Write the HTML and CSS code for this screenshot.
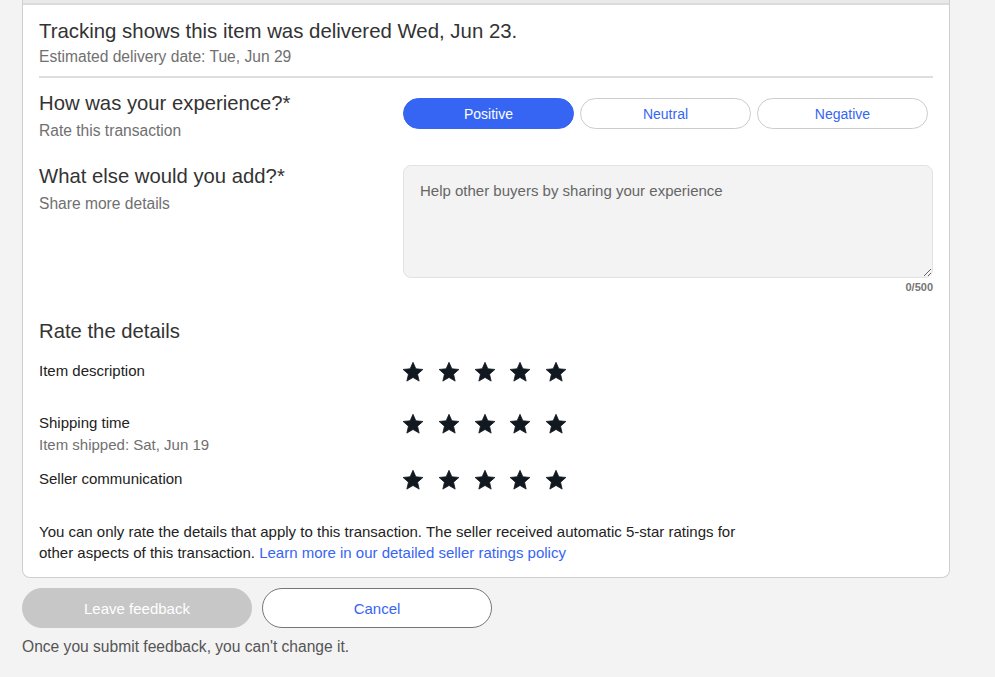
FILE: index.html
```html
<!DOCTYPE html>
<html lang="en">
<head>
<meta charset="utf-8">
<title>Leave feedback</title>
<link rel="stylesheet" href="styles.css">
</head>
<body>
<div class="page">
  <section class="card">
    <div class="card-top"></div>
    <div class="card-body">
      <h2 class="tracking">Tracking shows this item was delivered Wed, Jun 23.</h2>
      <p class="muted est">Estimated delivery date: Tue, Jun 29</p>
      <hr class="sep">

      <div class="row exp-row">
        <div class="label-col">
          <h3 class="q">How was your experience?*</h3>
          <p class="muted">Rate this transaction</p>
        </div>
        <div class="choice">
          <button class="pill active">Positive</button>
          <button class="pill">Neutral</button>
          <button class="pill">Negative</button>
        </div>
      </div>

      <div class="row add-row">
        <div class="label-col">
          <h3 class="q">What else would you add?*</h3>
          <p class="muted">Share more details</p>
        </div>
        <div class="field">
          <textarea class="comment" placeholder="Help other buyers by sharing your experience"></textarea>
          <div class="counter">0/500</div>
        </div>
      </div>

      <h2 class="details-title">Rate the details</h2>

      <div class="row detail">
        <div class="label-col"><p class="dlabel">Item description</p></div>
        <div class="stars">
          <svg viewBox="0 0 24 24"><path d="M12 2.3l2.85 6.5 7.05.65-5.35 4.7 1.6 6.950L12 17.45 5.85 21.1l1.6-6.95-5.35-4.7 7.05-.65z"/></svg>
          <svg viewBox="0 0 24 24"><path d="M12 2.3l2.85 6.5 7.05.65-5.35 4.7 1.6 6.95L12 17.45 5.85 21.1l1.6-6.95-5.35-4.7 7.05-.65z"/></svg>
          <svg viewBox="0 0 24 24"><path d="M12 2.3l2.85 6.5 7.05.65-5.35 4.7 1.6 6.95L12 17.45 5.85 21.1l1.6-6.95-5.35-4.7 7.05-.65z"/></svg>
          <svg viewBox="0 0 24 24"><path d="M12 2.3l2.85 6.5 7.05.65-5.35 4.7 1.6 6.95L12 17.45 5.85 21.1l1.6-6.95-5.35-4.7 7.05-.65z"/></svg>
          <svg viewBox="0 0 24 24"><path d="M12 2.3l2.85 6.5 7.05.65-5.35 4.7 1.6 6.95L12 17.45 5.85 21.1l1.6-6.95-5.35-4.7 7.05-.65z"/></svg>
        </div>
      </div>

      <div class="row detail">
        <div class="label-col">
          <p class="dlabel">Shipping time</p>
          <p class="muted dsub">Item shipped: Sat, Jun 19</p>
        </div>
        <div class="stars">
          <svg viewBox="0 0 24 24"><path d="M12 2.3l2.85 6.5 7.05.65-5.35 4.7 1.6 6.95L12 17.45 5.85 21.1l1.6-6.95-5.35-4.7 7.05-.65z"/></svg>
          <svg viewBox="0 0 24 24"><path d="M12 2.3l2.85 6.5 7.05.65-5.35 4.7 1.6 6.95L12 17.45 5.85 21.1l1.6-6.95-5.35-4.7 7.05-.65z"/></svg>
          <svg viewBox="0 0 24 24"><path d="M12 2.3l2.85 6.5 7.05.65-5.35 4.7 1.6 6.95L12 17.45 5.85 21.1l1.6-6.95-5.35-4.7 7.05-.65z"/></svg>
          <svg viewBox="0 0 24 24"><path d="M12 2.3l2.85 6.5 7.05.65-5.35 4.7 1.6 6.95L12 17.45 5.85 21.1l1.6-6.95-5.35-4.7 7.05-.65z"/></svg>
          <svg viewBox="0 0 24 24"><path d="M12 2.3l2.85 6.5 7.05.65-5.35 4.7 1.6 6.95L12 17.45 5.85 21.1l1.6-6.95-5.35-4.7 7.05-.65z"/></svg>
        </div>
      </div>

      <div class="row detail">
        <div class="label-col"><p class="dlabel">Seller communication</p></div>
        <div class="stars">
          <svg viewBox="0 0 24 24"><path d="M12 2.3l2.85 6.5 7.05.65-5.35 4.7 1.6 6.95L12 17.45 5.85 21.1l1.6-6.95-5.35-4.7 7.05-.65z"/></svg>
          <svg viewBox="0 0 24 24"><path d="M12 2.3l2.85 6.5 7.05.65-5.35 4.7 1.6 6.95L12 17.45 5.85 21.1l1.6-6.95-5.35-4.7 7.05-.65z"/></svg>
          <svg viewBox="0 0 24 24"><path d="M12 2.3l2.85 6.5 7.05.65-5.35 4.7 1.6 6.95L12 17.45 5.85 21.1l1.6-6.95-5.35-4.7 7.05-.65z"/></svg>
          <svg viewBox="0 0 24 24"><path d="M12 2.3l2.85 6.5 7.05.65-5.35 4.7 1.6 6.95L12 17.45 5.85 21.1l1.6-6.95-5.35-4.7 7.05-.65z"/></svg>
          <svg viewBox="0 0 24 24"><path d="M12 2.3l2.85 6.5 7.05.65-5.35 4.7 1.6 6.95L12 17.45 5.85 21.1l1.6-6.95-5.35-4.7 7.05-.65z"/></svg>
        </div>
      </div>

      <p class="policy">You can only rate the details that apply to this transaction. The seller received automatic 5-star ratings for other aspects of this transaction. <a href="#">Learn more in our detailed seller ratings policy</a></p>
    </div>
  </section>

  <div class="actions">
    <button class="btn btn-primary" disabled>Leave feedback</button>
    <button class="btn btn-secondary">Cancel</button>
  </div>
  <p class="note">Once you submit feedback, you can't change it.</p>
</div>
</body>
</html>
```

FILE: styles.css
```css
html, body {
  margin: 0;
  padding: 0;
}
body {
  background: #f3f3f3;
  font-family: "Liberation Sans", Arial, sans-serif;
  color: #333;
}
p, h2, h3 { margin: 0; font-weight: normal; }

.page {
  width: 928px;
  margin-left: 22px;
}

.card {
  background: #fff;
  border: 1px solid #cfcfcf;
  border-top: none;
  border-radius: 0 0 8px 8px;
}
.card-top {
  height: 3px;
  background: #e9e9e9;
  border-bottom: 2px solid #dcdcdc;
}
.card-body {
  padding: 14px 16px 14px 16px;
}

.tracking {
  font-size: 20.4px;
  line-height: 24px;
  color: #333;
}
.muted {
  font-size: 15.6px;
  line-height: 20px;
  color: #707070;
}
.est { margin-top: 4px; }
.sep {
  border: none;
  height: 2px;
  background: #dedede;
  margin: 9px 0 0;
}

.row {
  display: grid;
  grid-template-columns: 364px 1fr;
}
.exp-row { margin-top: 13px; }
.q {
  font-size: 20.3px;
  line-height: 24px;
  color: #333;
  margin-bottom: 6px;
}

.choice {
  display: flex;
  gap: 6px;
  padding-top: 7px;
}
.pill {
  width: 171px;
  height: 31px;
  border-radius: 16px;
  border: 1px solid #cccccc;
  background: #fff;
  color: #3665f3;
  font-family: "Liberation Sans", Arial, sans-serif;
  font-size: 14px;
  padding: 0;
}
.pill.active {
  background: #3665f3;
  border-color: #3665f3;
  color: #fff;
}

.add-row { margin-top: 23px; }
.field {
  display: flex;
  flex-direction: column;
  padding-top: 1px;
}
.comment {
  box-sizing: border-box;
  height: 113px;
  width: 100%;
  background: #f3f3f3;
  border: 1px solid #e2e2e2;
  border-radius: 8px;
  padding: 16px;
  font-family: "Liberation Sans", Arial, sans-serif;
  font-size: 15px;
  line-height: 18px;
  color: #333;
  resize: vertical;
  margin: 0;
  display: block;
}
.comment::placeholder { color: #666; }
.counter {
  text-align: right;
  font-size: 11px;
  line-height: 14px;
  font-weight: bold;
  color: #767676;
  margin-top: 2px;
}

.details-title {
  font-size: 20.3px;
  line-height: 24px;
  color: #333;
  margin-top: 25px;
  margin-bottom: 18px;
}

.detail {
  min-height: 38px;
  margin-bottom: 14px;
}
.dlabel {
  font-size: 15px;
  line-height: 20px;
  color: #222;
}
.dsub {
  font-size: 15px;
  line-height: 20px;
  margin-top: 2px;
}
.stars {
  display: flex;
  gap: 11.75px;
  margin-top: -1px;
  margin-left: -2px;
  height: 24px;
}
.stars svg {
  width: 24px;
  height: 24px;
  fill: #111820;
  stroke: #111820;
  stroke-width: 0.8;
  stroke-linejoin: round;
}

.policy {
  max-width: 715px;
  font-size: 15px;
  line-height: 21px;
  color: #222;
}
.policy a {
  color: #3665f3;
  text-decoration: none;
}

.actions {
  display: flex;
  gap: 10px;
  margin-top: 10px;
}
.btn {
  width: 230px;
  height: 40px;
  border-radius: 20px;
  font-family: "Liberation Sans", Arial, sans-serif;
  font-size: 15px;
  padding: 0;
}
.btn-primary {
  background: #c7c7c7;
  border: 1px solid #c7c7c7;
  color: #fff;
}
.btn-secondary {
  background: #fff;
  border: 1px solid #767676;
  color: #3665f3;
}
.note {
  font-size: 15.6px;
  line-height: 20px;
  color: #555;
  margin-top: 9px;
}
```
